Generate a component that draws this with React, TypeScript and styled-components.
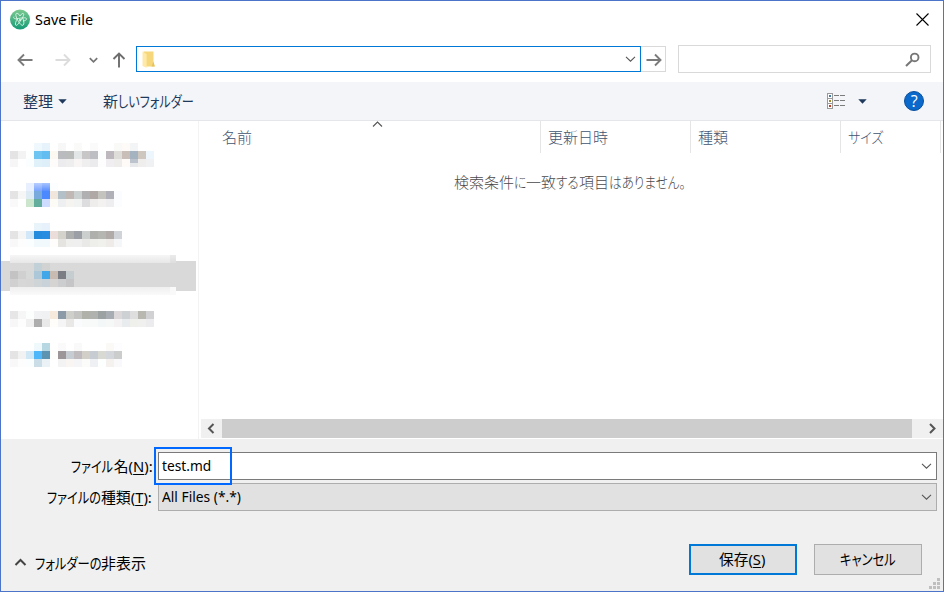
import React from "react";
import styled, { createGlobalStyle } from "styled-components";

const GlobalStyle = createGlobalStyle`
  * { box-sizing: border-box; }
  body {
    margin: 0;
    font-family: "Noto Sans", "Noto Sans CJK JP", sans-serif;
    font-size: 14px;
    color: #000;
  }
  button { font: inherit; color: inherit; padding: 0; margin: 0; background: none; border: 0; }
`;

const Dialog = styled.div`
  position: relative;
  width: 944px;
  height: 592px;
  border: 1px solid #4c74c8;
  background: #fff;
  display: flex;
  flex-direction: column;
  overflow: hidden;
`;

const Label = styled.span<{ $w: number; $sx?: number; $size?: number; $color?: string; $light?: boolean; $lift?: number }>`
  display: inline-block;
  flex: none;
  width: ${(p) => p.$w}px;
  margin-bottom: ${(p) => p.$lift ?? 0}px;
  white-space: nowrap;
  text-align: left;
  line-height: 20px;
  font-size: ${(p) => p.$size ?? 15}px;
  font-weight: ${(p) => (p.$light ? 300 : 400)};
  color: ${(p) => p.$color ?? "#000"};
  transform: scaleX(${(p) => p.$sx ?? 1});
  transform-origin: 0 50%;
  font-feature-settings: "palt";
  u { text-underline-offset: 2px; text-decoration-thickness: 1px; text-decoration-skip-ink: none; }
`;

/* Condensed kana run, as in the narrow kana of a UI gothic face. */
const Kana = styled.span<{ $w: number; $sx?: number }>`
  display: inline-block;
  width: ${(p) => p.$w}px;
  white-space: nowrap;
  transform: scaleX(${(p) => p.$sx ?? 0.82});
  transform-origin: 0 50%;
`;

const TitleBar = styled.header`
  height: 37px;
  flex: none;
  display: flex;
  align-items: center;
  padding: 0 14px 0 8px;
  gap: 5px;
`;

const CloseButton = styled.button`
  margin-left: auto;
  display: flex;
`;

const NavBar = styled.nav`
  height: 44px;
  flex: none;
  display: flex;
  align-items: center;
  padding: 0 12px 0 15px;
`;

const NavIcon = styled.button<{ $w: number; $ml?: number }>`
  width: ${(p) => p.$w}px;
  margin-left: ${(p) => p.$ml ?? 0}px;
  height: 20px;
  flex: none;
  display: flex;
  align-items: center;
  justify-content: center;
`;

const AddressBox = styled.div`
  width: 505px;
  height: 26px;
  margin: 0 0 2px 9px;
  border: 1px solid #0078d7;
  display: flex;
  align-items: center;
  justify-content: space-between;
  padding: 0 4px 0 5px;
`;

const GoButton = styled.button`
  width: 25px;
  height: 26px;
  margin-bottom: 2px;
  border: 1px solid #d9d9d9;
  border-left: 0;
  display: flex;
  align-items: center;
  justify-content: center;
  padding: 2px 0 0 1px;
`;

const SearchBox = styled.div`
  width: 253px;
  height: 28px;
  margin: 0 0 2px 12px;
  border: 1px solid #d9d9d9;
  display: flex;
  align-items: center;
  justify-content: flex-end;
  padding-right: 10px;
`;

const Toolbar = styled.div`
  height: 39px;
  flex: none;
  background: #f4f5f8;
  border-bottom: 1px solid #e4e6e9;
  display: flex;
  align-items: center;
  padding: 0 19px 0 22px;
`;

const OrganizeButton = styled.button`
  display: flex;
  align-items: center;
  gap: 4px;
  margin-right: 36px;
`;

const ViewButton = styled.button`
  margin-left: auto;
  display: flex;
  align-items: center;
  gap: 13px;
  margin-right: 37px;
`;

const Help = styled.button`
  display: flex;
`;

const Body = styled.main`
  height: 318px;
  flex: none;
  display: flex;
`;

const Sidebar = styled.aside`
  width: 198px;
  padding-top: 14px;
  border-right: 1px solid #f3f3f3;
`;

const TreeItem = styled.div<{ $selected?: boolean }>`
  width: 195px;
  height: 40px;
  padding-left: 9px;
  background: ${(p) => (p.$selected ? "linear-gradient(#fff 6px, #d9d9d9 6px, #d9d9d9 36px, #fff 36px)" : "none")};
`;

const CellRow = styled.div`
  width: 166px;
  height: 8px;
  display: flex;
  overflow: hidden;
`;

const Cell = styled.span<{ $c: string }>`
  flex: none;
  width: 8px;
  height: 8px;
  background: ${(p) => p.$c};
`;

const FileArea = styled.section`
  flex: 1;
  display: flex;
  flex-direction: column;
  padding-left: 2px;
`;

const HeaderRow = styled.div`
  height: 32px;
  position: relative;
  display: flex;
`;

const HeaderCell = styled.div<{ $w: number; $pl: number }>`
  width: ${(p) => p.$w}px;
  padding-left: ${(p) => p.$pl}px;
  border-right: 1px solid #e5e5e5;
  display: flex;
  align-items: center;
`;

const SortMark = styled.svg`
  position: absolute;
  left: 171px;
  top: 0;
`;

const EmptyMessage = styled.div`
  flex: 1;
  padding: 19px 0 0 253px;
`;

const ScrollBar = styled.div`
  height: 19px;
  margin-bottom: 1px;
  background: #f0f0f0;
  display: flex;
  align-items: center;
`;

const ScrollArrow = styled.button<{ $w: number; $pl?: number }>`
  width: ${(p) => p.$w}px;
  height: 19px;
  display: flex;
  align-items: center;
  justify-content: center;
  padding-left: ${(p) => p.$pl ?? 0}px;
`;

const Thumb = styled.div`
  width: 690px;
  height: 19px;
  background: #cdcdcd;
`;

const Footer = styled.footer`
  flex: 1;
  background: #f0f0f0;
  position: relative;
  padding-top: 13px;
`;

const FieldRow = styled.div`
  display: flex;
  align-items: center;
  justify-content: flex-end;
  padding-right: 6px;
  margin-bottom: 3px;
`;

const Combo = styled.div<{ $list?: boolean }>`
  width: 779px;
  height: 28px;
  margin-left: 5px;
  border: 1px solid ${(p) => (p.$list ? "#adadad" : "#7a7a7a")};
  background: ${(p) => (p.$list ? "#e1e1e1" : "#fff")};
  display: flex;
  align-items: center;
  justify-content: space-between;
  padding: 0 4px 0 3px;
`;

const NameHighlight = styled.div`
  position: absolute;
  left: 153px;
  top: 8px;
  width: 78px;
  height: 38px;
  border: 2px solid #0068ff;
`;

const ActionRow = styled.div`
  display: flex;
  align-items: center;
  padding: 0 21px 0 13px;
  margin-top: 33px;
`;

const HideFolders = styled.button`
  display: flex;
  align-items: center;
  gap: 8px;
  margin-right: auto;
  padding-top: 6px;
`;

const DialogButton = styled.button<{ $primary?: boolean }>`
  width: 108px;
  height: 31px;
  margin-left: ${(p) => (p.$primary ? 0 : 17)}px;
  background: #e1e1e1;
  border: ${(p) => (p.$primary ? "2px solid #0078d7" : "1px solid #adadad")};
  display: flex;
  align-items: center;
  justify-content: center;
`;

const Grip = styled.svg`
  position: absolute;
  right: 3px;
  bottom: 2px;
`;

const _ = "transparent";

type Item = { selected?: boolean; rows: string[][] };

const strip = (a: string, b: string) => [...Array(20).fill(a), b];

const items: Item[] = [
  {
    rows: [
      [],
      [_, _, _, "#eff8fc", "#e6f3fb", _, "#f7f7f7", _, "#fafaf8", _, "#fafafa", _, _, "#f9f9f8", "#fdfaf8", "#f3f4f5"],
      ["#e4e4e4", "#f3f3f3", "#fdffff", "#6fc5f1", "#63bdf0", "#fbf8f2", "#b9bbbf", "#babcbb", "#e2e6e7", "#c9c6c8", "#bcbec3", "#fcfdfd", "#bdb8bd", "#deddda", "#cabfb8", "#a5b2c0", "#cec7bf", "#edf6fc"],
      ["#f6f6f6", _, "#fbfefe", "#e0f1fa", "#dfeff9", "#fdfcfa", "#ececee", "#eeeeee", "#f8f5f4", "#f0eff0", "#ebebed", "#fdfdfd", "#f0eef0", "#eeedeb", "#fefaf7", "linear-gradient(#bcc3cc 50%, #e6e8ea 50%)", "#f0eeed", "#f0f1f2"],
    ],
  },
  {
    rows: [
      [],
      [_, _, "#e8f0ff", "linear-gradient(#b8ceff, #7ca4ff)", "linear-gradient(#a8c4ff, #5a8eff)", "#fbfdff"],
      ["#e4e4e4", "#f6f6f6", "#dfebf4", "#79aade", "#4a89ff", "#f1e6dc", "#b3c0c8", "#c0b8b5", "#cbd0d1", "#b0afb2", "#afa8a5", "#c5c3be", "#b0b0b9", "#fafcff"],
      ["#f9f9f9", _, "#cbe6cc", "#62ad9b", "#cedcff", "#fdfbf6", "#eeeff1", "#f6f4f1", "#f1f2f2", "#dddde0", "#efedeb", "#f3f2f0", "#eeeef1", "#fbfdff"],
    ],
  },
  {
    rows: [
      [],
      [_, _, _, "#e9f3fa", "#e6f1fb"],
      ["#e4e4e4", "#f5f5f5", "#d2e8f8", "#258bdd", "#288de0", "#eaddda", "#d3d3cc", "#acafae", "#9c9fa6", "#cbd0cf", "#afafac", "#b5b5b1", "#b0aba8", "#d0d3d8"],
      ["#f8f8f8", "#fdfdfd", "#fbfeff", "#f1f9fd", "#f2f9fd", "#fffdfc", "#e6e4e0", "#efefee", "#efeff0", "#e9eae8", "#eeeeeb", "#f0f0ec", "#eeebe8", "#f5f6f8"],
    ],
  },
  {
    selected: true,
    rows: [
      strip("linear-gradient(#f6f6f6, #e7e7e7)", "linear-gradient(#ebebeb, #dedede)"),
      [_, _, _, "#c2d0d7", "#d1d3d3"].concat(Array(16).fill("#d9d9d9")),
      ["#c3c3c3", "#d0d0d0", "#d7d9d9", "#acc7d7", "#41a7e9", "#c7bbb2", "#7a7e84", "#c6cdd0"].concat(Array(13).fill("#d9d9d9")),
      ["#d0d0d0", "#d7d7d7", "#d6d6d6", "#cfd4d6", "#c8d2d8", "#d6d4d2", "#cccdcf", "#c5c5c7"].concat(Array(13).fill("#d9d9d9")),
      strip("linear-gradient(#efefef, #fafafa)", "#f9f9f9"),
    ],
  },
  {
    rows: [
      [],
      [],
      ["#e6e6e6", "#f6f6f6", "#fcfefe", "#f1f2f4", "#f0f1f3", "#f5eadc", "#8d9aa8", "#cececb", "#c3c3c1", "#b0b1a9", "#b0b2af", "#9ca2a2", "#a7adb2", "#dcd8da", "#cdd1d4", "#dedede", "#b8b8b0", "#d1d1d3"],
      ["#f7f7f7", "#fdfdfd", "#f0f0f0", "#adadad", "#e9e9e9", "#fffdfa", "#f5f5f6", "#e9e8e6", "#f9fbfc", "#f8f9f9", "#f8f9f9", "#f4f7f7", "#f6f7f7", "#f4f2f3", "#e9ecee", "#efefec", "#f0f0ee", "#ececef"],
    ],
  },
  {
    rows: [
      [],
      [_, _, _, "#eff8fb", "#b7d7e3", _, "#fafafa", _, "#f9f9f9", _, _, _, "#fbf9f6", "#fdfdff"],
      ["#e4e4e4", "#f2f2f2", "#d0e7f5", "#4db7fa", "#5c93b0", "#fefefc", "#9d9698", "#c7ccd2", "#bfbabd", "#d1cfc8", "#c7cbd2", "#d9d9d4", "#d3d6da", "#cbcccc"],
      ["#f8f8f8", "#fdfdfd", "#fbfefe", "#cbdee7", "#eaf2f5", _, "#f4f3f4", "#f9f5f3", "#f5f4f6", "#fbfbf9", "#eff0f3", "#fdfefe", "#f5f1ef", "#f9f9fb"],
    ],
  },
];

const AtomLogo = () => (
  <svg width="21" height="21" viewBox="0 0 21 21">
    <defs>
      <linearGradient id="atom" x1="0" y1="0" x2="0" y2="1">
        <stop offset="0" stopColor="#7cc98f" />
        <stop offset="1" stopColor="#159b76" />
      </linearGradient>
    </defs>
    <circle cx="11" cy="10.5" r="10" fill="url(#atom)" />
    <g fill="none" stroke="#e0f6e8" strokeWidth="0.9">
      <path d="M5 7.6C4 9.2 5.6 10.2 8 9.7C12 9 17.2 8 17.6 9.8C17.7 11 15.6 11.8 14 12.2" />
      <path d="M8.2 4.4C6.2 4 6.6 6.8 8 9.7C9.6 13.4 12.4 17 14 16.2C15.6 15.4 14.8 11.4 13.6 8.8" />
      <path d="M14 4.4C15.8 5 14 8 12 11C10 14 8 17 6.8 16.2C5.6 15.4 7 12 8.4 9.6" />
      <path d="M8.2 4.4C9.6 4.6 10.2 5.8 11 7C11.8 5.8 13 4.2 14 4.4" />
    </g>
    <circle cx="11" cy="11" r="1" fill="#e6faee" />
  </svg>
);

const Arrow = ({ color, dir }: { color: string; dir: "left" | "right" | "up" }) => {
  const turn = { left: 0, right: 180, up: 90 }[dir];
  return (
    <svg width="16" height="16" viewBox="0 0 16 16">
      <path d="M15.5 8H1.5M7 2.5L1.5 8L7 13.5" transform={`rotate(${turn} 8 8)`} fill="none" stroke={color} strokeWidth="1.9" />
    </svg>
  );
};

const ComboChevron = () => (
  <svg width="11" height="8" viewBox="0 0 11 8">
    <path d="M1 1.8L5.5 6.2L10 1.8" fill="none" stroke="#555" strokeWidth="1.05" />
  </svg>
);

const Folder = () => (
  <svg width="14" height="17" viewBox="0 0 14 17">
    <path d="M1.5 .5H11.5V11L12.5 15.5H3Z" fill="#f6d77c" />
    <path d="M11.5 10.5L12.8 15.5H9.5Z" fill="#e7c35c" />
    <path d="M.5 .5L4.6 3V16.8L.5 15Z" fill="#ffe9a8" />
  </svg>
);

const Caret = () => (
  <svg width="9" height="5" viewBox="0 0 9 5">
    <path d="M0.3 .3H8.7L4.5 4.7Z" fill="#1e395b" />
  </svg>
);

const ViewIcon = () => (
  <svg width="18" height="16" viewBox="0 0 18 16" shapeRendering="crispEdges">
    <path d="M.5 .5H5.5V15.5H.5ZM.5 5.5H5.5M.5 10.5H5.5" fill="#fff" stroke="#9a9a9a" />
    <rect x="2" y="2" width="2" height="2" fill="#3d7ba8" />
    <rect x="2" y="7" width="2" height="2" fill="#a08a2c" />
    <rect x="2" y="12" width="2" height="2" fill="#c33a22" />
    <path d="M7 2.5H12M13 2.5H18M7 7.5H12M13 7.5H18M7 12.5H12M13 12.5H18" stroke="#7c7c7c" />
  </svg>
);

const navy = "#1e395b";
const head = "#3f5470";

export default function App() {
  return (
    <>
      <GlobalStyle />
      <Dialog>
        <TitleBar>
          <AtomLogo />
          <Label $w={60} $size={14.5} $sx={0.99} $lift={2}>Save File</Label>
          <CloseButton aria-label="Close">
            <svg width="13" height="13" viewBox="0 0 13 13">
              <path d="M.5 .5L12.5 12.5M12.5 .5L.5 12.5" stroke="#000" strokeWidth="1.1" />
            </svg>
          </CloseButton>
        </TitleBar>

        <NavBar>
          <NavIcon $w={18}><Arrow color="#7b7b7b" dir="left" /></NavIcon>
          <NavIcon $w={18} $ml={20}><Arrow color="#dcdcdc" dir="right" /></NavIcon>
          <NavIcon $w={12} $ml={15}>
            <svg width="9" height="7" viewBox="0 0 9 7">
              <path d="M.8 1.2L4.5 4.9L8.2 1.2" fill="none" stroke="#757575" strokeWidth="1.7" />
            </svg>
          </NavIcon>
          <NavIcon $w={16} $ml={12}><Arrow color="#6d6d6d" dir="up" /></NavIcon>
          <AddressBox>
            <Folder />
            <ComboChevron />
          </AddressBox>
          <GoButton aria-label="Go"><Arrow color="#7b7b7b" dir="right" /></GoButton>
          <SearchBox>
            <svg width="15" height="15" viewBox="0 0 15 15">
              <circle cx="9.7" cy="5.4" r="3.8" fill="none" stroke="#767676" strokeWidth="1.9" />
              <path d="M7 8.2L1 14" stroke="#767676" strokeWidth="2" />
            </svg>
          </SearchBox>
        </NavBar>

        <Toolbar>
          <OrganizeButton>
            <Label $w={31} $color={navy}>整理</Label>
            <Caret />
          </OrganizeButton>
          <Label $w={92} $color={navy}>新<Kana $w={76} $sx={0.81}>しいフォルダー</Kana></Label>
          <ViewButton>
            <ViewIcon />
            <Caret />
          </ViewButton>
          <Help aria-label="Help">
            <svg width="20" height="20" viewBox="0 0 20 20">
              <circle cx="10" cy="10" r="9.5" fill="#0a69cb" stroke="#0a4f9c" />
              <text x="10.2" y="15.6" textAnchor="middle" fontSize="16" fontWeight="500" fontFamily="Open Sans, sans-serif" fill="#fff">?</text>
            </svg>
          </Help>
        </Toolbar>

        <Body>
          <Sidebar>
            {items.map((item, i) => (
              <TreeItem key={i} $selected={item.selected}>
                {item.rows.map((row, r) => (
                  <CellRow key={r}>
                    {row.map((c, k) => <Cell key={k} $c={c} />)}
                  </CellRow>
                ))}
              </TreeItem>
            ))}
          </Sidebar>
          <FileArea>
            <HeaderRow>
              <HeaderCell $w={340} $pl={21}><Label $w={30} $light $color={head}>名前</Label></HeaderCell>
              <HeaderCell $w={150} $pl={7}><Label $w={60} $light $color={head}>更新日時</Label></HeaderCell>
              <HeaderCell $w={150} $pl={7}><Label $w={30} $light $color={head}>種類</Label></HeaderCell>
              <HeaderCell $w={100} $pl={7}><Label $w={36} $light $color={head}><Kana $w={36} $sx={0.87}>サイズ</Kana></Label></HeaderCell>
              <SortMark width="11" height="7" viewBox="0 0 11 7">
                <path d="M1 5.5L5.5 1L10 5.5" fill="none" stroke="#555" strokeWidth="1.1" />
              </SortMark>
            </HeaderRow>
            <EmptyMessage>
              <Label $w={236} $light $color="#4a4a4a">
                検索条件<Kana $w={12} $sx={0.86}>に</Kana>一致<Kana $w={23} $sx={0.84}>する</Kana>項目<Kana $w={80} $sx={0.84}>はありません。</Kana>
              </Label>
            </EmptyMessage>
            <ScrollBar>
              <ScrollArrow $w={21}>
                <svg width="10" height="11" viewBox="0 0 10 11">
                  <path d="M6.5 1L2 5.5L6.5 10" fill="none" stroke="#555" strokeWidth="2" />
                </svg>
              </ScrollArrow>
              <Thumb />
              <ScrollArrow $w={31} $pl={9}>
                <svg width="9" height="11" viewBox="0 0 9 11">
                  <path d="M2 1L6.5 5.5L2 10" fill="none" stroke="#555" strokeWidth="2" />
                </svg>
              </ScrollArrow>
            </ScrollBar>
          </FileArea>
        </Body>

        <Footer>
          <FieldRow>
            <Label $w={82} $sx={0.985}><Kana $w={43.5}>ファイル</Kana>名(<u>N</u>):</Label>
            <Combo>
              <Label $w={50} $size={14} $sx={0.98}>test.md</Label>
              <ComboChevron />
            </Combo>
          </FieldRow>
          <FieldRow>
            <Label $w={106} $sx={0.99}><Kana $w={54.5}>ファイルの</Kana>種類(<u>T</u>):</Label>
            <Combo $list>
              <Label $w={80} $size={14} $sx={0.985}>All Files (*.*)</Label>
              <ComboChevron />
            </Combo>
          </FieldRow>
          <NameHighlight />
          <ActionRow>
            <HideFolders>
              <svg width="13" height="9" viewBox="0 0 13 9">
                <path d="M1.5 7L6.5 2L11.5 7" fill="none" stroke="#444" strokeWidth="2" />
              </svg>
              <Label $w={111}><Kana $w={66}>フォルダーの</Kana>非表示</Label>
            </HideFolders>
            <DialogButton $primary><Label $w={48} $sx={0.98} $lift={2}>保存(<u>S</u>)</Label></DialogButton>
            <DialogButton><Label $w={57} $lift={2}><Kana $w={57}>キャンセル</Kana></Label></DialogButton>
          </ActionRow>
          <Grip width="12" height="12" viewBox="0 0 12 12" shapeRendering="crispEdges">
            <path d="M9 1h3v3h-3zM5 5h3v3h-3zM9 5h3v3h-3zM1 9h3v3h-3zM5 9h3v3h-3zM9 9h3v3h-3z" fill="#bfbfbf" />
          </Grip>
        </Footer>
      </Dialog>
    </>
  );
}
